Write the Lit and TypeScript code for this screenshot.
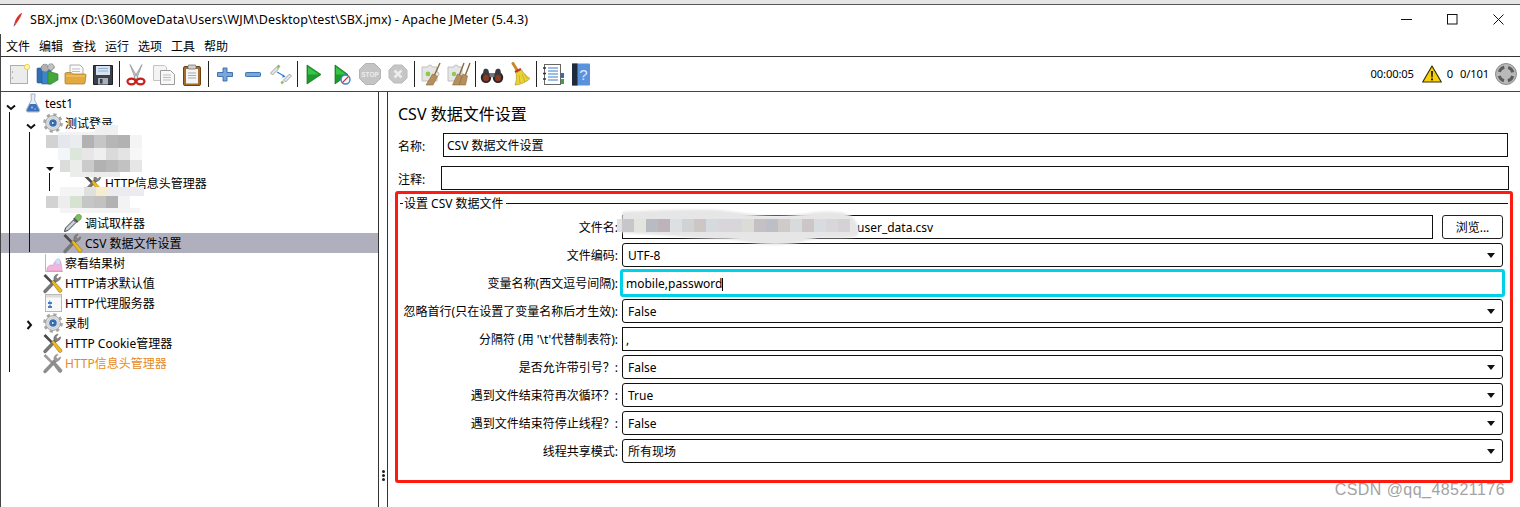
import { LitElement, html, css, svg } from "lit";
import { customElement } from "lit/decorators.js";

const icon = (w: number, h: number, body: unknown, cls = "") =>
  html`<svg class=${cls} width=${w} height=${h} viewBox="0 0 ${w} ${h}">${body}</svg>`;

const gear = () => icon(20, 20, svg`
  <circle cx="10" cy="10" r="8" fill="none" stroke="#a6a6a6" stroke-width="3.6" stroke-dasharray="3.100 3.180"/>
  <circle cx="10" cy="10" r="7.400" fill="#dedede" stroke="#9a9a9a" stroke-width=".8"/>
  <circle cx="10" cy="10" r="5" fill="#f0f4f8" stroke="#b4b4b4" stroke-width=".6"/>
  <circle cx="10" cy="10" r="3.800" fill="#3a72b8"/>
  <circle cx="10" cy="10" r="1.900" fill="#1d4f90"/>
  <path d="M8.900 8.600l2.800 1.400-2.800 1.400z" fill="#dbe7f4"/>`);

const tools = (gray = false) => icon(21, 21, svg`
  <path d="M3 18.500L14 7" stroke=${gray ? "#8e8e8e" : "#777"} stroke-width="3.400" stroke-linecap="round"/>
  <path d="M12.500 8A4.500 4.500 0 0 1 15.500 1.200l.6.2-2.200 2.700 1.700 1.800 2.700-2.100.4.800a4.500 4.500 0 0 1-6.200 3.400z" fill=${gray ? "#9a9a9a" : "#858585"} stroke=${gray ? "#8c8c8c" : "#555"} stroke-width=".5"/>
  <path d="M1.500 3L3.500 1l7.200 7.500-1.800 1.800z" fill=${gray ? "#9c9c9c" : "#4a4a4a"}/>
  <path d="M9.500 9l1.800-1.800 8.300 9.300a1.900 1.900 0 0 1-2.700 2.600z" fill=${gray ? "#8f8f8f" : "#ecba1e"} stroke=${gray ? "#808080" : "#9b7410"} stroke-width=".6"/>`);

const dropper = icon(20, 20, svg`
  <path d="M1.500 18.500l1-3.500 8-8 2.500 2.500-8 8z" fill="#c9d2d8" stroke="#39404a" stroke-width="1"/>
  <path d="M10 6l4 4 1.400-1.400-4-4z" fill="#555"/>
  <path d="M12 5l3 3c2.500-.6 4-3.200 3.200-5.200-.7-1.700-3.400-1.600-4.700-.6C12.400 3 12.200 4 12 5z" fill="#7cc05c" stroke="#4d8c38" stroke-width=".6"/>`);

const flask = icon(18, 20, svg`
  <path d="M7 1h4v1l-.4 5 5 9.500c.5 1.500-.3 2.500-1.600 2.500H4c-1.300 0-2.100-1-1.600-2.500l5-9.500L7 2z" fill="#e6edf5" stroke="#97a4b4" stroke-width=".8"/>
  <path d="M5.800 11h6.400l3 6c.3 1-.3 1.600-1.200 1.600H4c-.9 0-1.500-.6-1.200-1.600z" fill="#3d6fbf"/>
  <circle cx="8" cy="14.500" r="1" fill="#9fc0ee"/><circle cx="11" cy="16" r=".8" fill="#9fc0ee"/>`);

const chart = icon(20, 20, svg`
  <path d="M2.500 1v17.500H20" fill="none" stroke="#b9b9b9"/>
  <path d="M4 18v-3c2-3 4-3.500 6-2.500 1-3.500 3.500-6 5.500-6s3 4 3.500 11.500z" fill="#f2b6dc" stroke="#d98cc4" stroke-width=".6"/>
  <path d="M12 9c1-2 2.500-3.500 3.500-3.500s1.800 2 1.800 4-1.500 2.500-3 1.800S11.500 10 12 9z" fill="#cfe1f6" stroke="#9bb8dc" stroke-width=".5"/>`);

const proxy = icon(20, 20, svg`
  <rect x="2.500" y="1.500" width="16" height="17" fill="#f8f8f8" stroke="#b8b8b8"/>
  <rect x="3" y="2" width="15" height="2.500" fill="#dcdcdc"/>
  <rect x="5" y="9" width="4" height="2" fill="#3f7fc4"/><rect x="5" y="13" width="4" height="2" fill="#3f7fc4"/>
  <path d="M6 7l2 1.500-2 .5zM6 11.500h2v1.500H6z" fill="#7da9d8"/>`);

const tb: Record<string, unknown> = {
  new: svg`<rect x="3.500" y="3.500" width="17" height="18" fill="#ececec" stroke="#adadad"/>
    <circle cx="5.500" cy="10" r=".7" fill="#999"/><circle cx="5.500" cy="16" r=".7" fill="#999"/>
    <circle cx="20" cy="5" r="2.600" fill="#fff6b0" stroke="#e8d350"/>`,
  templates: svg`<rect x="2" y="6" width="7" height="15" rx="1" fill="#2f6fb5" stroke="#1f4f88" stroke-width=".6"/>
    <rect x="7" y="8" width="9" height="14" fill="#3c86c8" stroke="#245a92" stroke-width=".6"/>
    <path d="M13 9l10 3v6l-7 4h-3z" fill="#43a83c" stroke="#2e7a2a" stroke-width=".6"/>
    <circle cx="10" cy="6" r="3.800" fill="#b0b0b0" stroke="#7c7c7c" stroke-dasharray="2 1"/><circle cx="16" cy="5" r="3.200" fill="#c2c2c2" stroke="#858585" stroke-dasharray="2 1"/>`,
  open: svg`<path d="M7 3h10l3 3v9H7z" fill="#fafafa" stroke="#999" stroke-width=".8"/>
    <path d="M9 7h8M9 9.500h8" stroke="#bdbdbd"/>
    <path d="M2 12c0-1 .6-1.500 1.500-1.500H8L10 12h12c.8 0 1 .7 1 1.500L22 21c-.1.700-.6 1-1.300 1H3.300c-.8 0-1.300-.4-1.300-1.200z" fill="#e2a93f" stroke="#a8741f" stroke-width=".7"/>
    <path d="M3 14h19" stroke="#f2cd7c"/>`,
  save: svg`<path d="M2.500 3.500h19v19h-19z" fill="#3b3f48" stroke="#1f2127"/>
    <rect x="5" y="4" width="14" height="9" fill="#d7e3f0"/><path d="M7 6.500h10M7 9h10" stroke="#8fb0d2"/>
    <rect x="7" y="16" width="10" height="6.500" fill="#aab0ba"/><rect x="9" y="17" width="2.500" height="4.500" fill="#3b3f48"/>`,
  cut: svg`<path d="M6 2.500l8 13.500-2.500 1.500zM18 2.500L10 16l2.500 1.500z" fill="#c9c9c9" stroke="#8e8e8e" stroke-width=".7"/>
    <ellipse cx="7.500" cy="19.500" rx="4" ry="2.800" fill="none" stroke="#c8201c" stroke-width="2.200"/>
    <ellipse cx="16.500" cy="19.500" rx="4" ry="2.800" fill="none" stroke="#c8201c" stroke-width="2.200"/>`,
  copy: svg`<path d="M1.500 3.500h11l2 2v13h-13z" fill="#f4f4f4" stroke="#c4c4c4"/>
    <path d="M8.500 8.500h10l4 4v10h-14z" fill="#f8f8f8" stroke="#9b9b9b"/>
    <path d="M11 13h8M11 15.500h8M11 18h8" stroke="#bbb"/>`,
  paste: svg`<rect x="3.500" y="4.500" width="17" height="19" rx="1.500" fill="#a36b2c" stroke="#6c4314"/>
    <rect x="6" y="7" width="12" height="14.500" fill="#f5f5f5"/>
    <path d="M8 11h8M8 13.500h8M8 16h8" stroke="#aaa"/>
    <rect x="8" y="3" width="8" height="4" rx="1" fill="#d0d0d0" stroke="#666" stroke-width=".7"/>`,
  plus: svg`<path d="M10 6h4v4.500h5.500v4H14V19h-4v-4.500H4.500v-4H10z" fill="#7ba6d8" stroke="#336aaa" stroke-width=".9"/>`,
  minus: svg`<rect x="4.500" y="10.500" width="15" height="4" rx=".8" fill="#7ba6d8" stroke="#336aaa" stroke-width=".9"/>`,
  toggle: svg`<path d="M1.500 11l6-6 2 2-6 6z" fill="#e4e4e4" stroke="#888" stroke-width=".7"/><path d="M7.500 4.500l2-2 2 2-2 2z" fill="#8cbd6e"/>
    <path d="M22.500 14l-6 6-2-2 6-6z" fill="#e4e4e4" stroke="#888" stroke-width=".7"/><path d="M15 20.500l-2 2-1.500-2 2-2z" fill="#8cbd6e"/>
    <path d="M8 10l7 4" stroke="#2d7fd6" stroke-width="1.200"/><path d="M16.500 15l-3.500.5 1.500-3z" fill="#2d7fd6"/>`,
  play: svg`<path d="M5 3l14 9.500L5 22z" fill="#1d9a2b" stroke="#0f6f1b" stroke-width=".7"/><path d="M6 5l11 7.500H6z" fill="#37c548"/>`,
  playNo: svg`<path d="M5 3l13 9.500L5 22z" fill="#1d9a2b" stroke="#0f6f1b" stroke-width=".7"/><path d="M6 5l10 7.500H6z" fill="#37c548"/>
    <circle cx="15.500" cy="17.500" r="4.500" fill="#f4f8ff" stroke="#3b7fd0" stroke-width="1.400"/><path d="M12.500 20.500l6-6" stroke="#d8303a" stroke-width="1.100"/>`,
  stop: svg`<path d="M7.500 1.500h9l6 6v9l-6 6h-9l-6-6v-9z" fill="#c4c4c4" stroke="#b4b4b4"/>
    <text x="12" y="14.800" text-anchor="middle" class="stoptxt">STOP</text>`,
  shut: svg`<path d="M8 3h8l5 5v8l-5 5H8l-5-5V8z" fill="#c6c6c6" stroke="#bababa" stroke-linejoin="round"/>
    <path d="M8.500 8.500l7 7m0-7l-7 7" stroke="#ececec" stroke-width="2.600"/>`,
  clear: svg`<path d="M3 5h6a2 2 0 0 1 4 0h5v5a2 2 0 0 1 0 4v5H3z" fill="#e6e6e6" stroke="#c0c0c0"/>
    <circle cx="9" cy="12" r="2.400" fill="#8fca4a"/>
    <path d="M21 1l-6 13" stroke="#8a6a3e" stroke-width="1.400"/><path d="M13.500 12l5 2.500L14 23H7z" fill="#b5905e" stroke="#8a6a3e" stroke-width=".6"/>`,
  clearAll: svg`<path d="M1 5h6a2 2 0 0 1 4 0h4v14H1z" fill="#e6e6e6" stroke="#c0c0c0"/>
    <circle cx="7" cy="12" r="2.200" fill="#8fca4a"/>
    <path d="M17 1l-5 13M23 1l-5 13" stroke="#8a6a3e" stroke-width="1.400"/>
    <path d="M10.500 12l4.500 2-3 9H5.500z" fill="#b5905e" stroke="#8a6a3e" stroke-width=".6"/><path d="M16 12l4.500 2-2 9H12z" fill="#b5905e" stroke="#8a6a3e" stroke-width=".6"/>`,
  binoculars: svg`<ellipse cx="6" cy="15.500" rx="5.200" ry="5.500" fill="#26262a"/><ellipse cx="18" cy="15.500" rx="5.200" ry="5.500" fill="#26262a"/>
    <path d="M3.500 8.500c0-2.200 4.500-2.200 5 0l1 5h5l1-5c.5-2.200 5-2.200 5 0l1 5H2.500z" fill="#3a3a40"/>
    <ellipse cx="6" cy="16" rx="3" ry="3.200" fill="#8b3a22"/><ellipse cx="18" cy="16" rx="3" ry="3.200" fill="#8b3a22"/>
    <rect x="9.500" y="11" width="5" height="4" fill="#777"/>`,
  broom: svg`<path d="M5 1.500l5 8" stroke="#c58a2e" stroke-width="3" stroke-linecap="round"/>
    <path d="M6.500 9l6-3 1 2-6 3z" fill="#cf2a20"/>
    <path d="M8 11l5.500-3c2 3 5 6.500 8.500 8.500-3 3-9 6-15 6.500 1.500-4 1.800-8 1-12z" fill="#e9d23a" stroke="#b69a18" stroke-width=".7"/>
    <path d="M11 13l1 8M14 12l3 8M16.500 12l3 5" stroke="#bfa51e" stroke-width=".7"/>`,
  list: svg`<rect x="3.500" y="2.500" width="16" height="20" fill="#fff" stroke="#666"/>
    <path d="M2 6h3M2 11.500h3M2 17h3" stroke="#333" stroke-width="1.500"/>
    <path d="M7 6h10M7 9h10M7 12h10M7 15h10M7 18h10" stroke="#3a7bc8"/>
    <rect x="20" y="11" width="3" height="5" fill="#2f6fb5"/><rect x="20" y="17" width="3" height="5" fill="#3aa53a"/>`,
  help: svg`<rect x="3" y="1.500" width="18" height="22" rx="1" fill="#5b92dc"/>
    <rect x="3" y="1.500" width="5.500" height="22" fill="#1f2a3a"/>
    <text x="14.500" y="17.500" text-anchor="middle" class="helptxt">?</text>`,
};

const groups = [
  ["new", "templates", "open", "save"],
  ["cut", "copy", "paste"],
  ["plus", "minus", "toggle"],
  ["play", "playNo", "stop", "shut"],
  ["clear", "clearAll"],
  ["binoculars", "broom"],
  ["list", "help"],
];

const menus = ["文件", "编辑", "查找", "运行", "选项", "工具", "帮助"];

type Row = { indent: number; label?: string; ic?: unknown; sel?: boolean; warm?: boolean };
const rows: Row[] = [
  { indent: 22, label: "test1", ic: flask },
  { indent: 42, label: "测试登录", ic: gear() },
  { indent: 0 },
  { indent: 0 },
  { indent: 82, label: "HTTP信息头管理器", ic: tools() },
  { indent: 0 },
  { indent: 62, label: "调试取样器", ic: dropper },
  { indent: 62, label: "CSV 数据文件设置", ic: tools(), sel: true },
  { indent: 42, label: "察看结果树", ic: chart },
  { indent: 42, label: "HTTP请求默认值", ic: tools() },
  { indent: 42, label: "HTTP代理服务器", ic: proxy },
  { indent: 42, label: "录制", ic: gear() },
  { indent: 42, label: "HTTP Cookie管理器", ic: tools() },
  { indent: 42, label: "HTTP信息头管理器", ic: tools(true), warm: true },
];

type Cell = [number, number, number, number, string];
const treeBlur: Cell[] = [
  [95, 125, 23, 10, "#f0f0f0"],
  [58, 132, 37, 3, "#f3f3f3"],
  [46, 135, 12, 13, "#d2d2d2"], [58, 135, 12, 13, "#e4e8ec"], [70, 135, 12, 13, "#eaecef"], [82, 135, 12, 13, "#b2b2b2"],
  [94, 135, 12, 13, "#c6c6c6"], [106, 135, 12, 13, "#b6b6b6"], [118, 135, 12, 13, "#b2b2b2"], [130, 135, 12, 13, "#f4f4f4"],
  [58, 148, 12, 12, "#f2f6f8"], [70, 148, 12, 12, "#dde6da"], [82, 148, 12, 12, "#e8e6e6"], [94, 148, 12, 12, "#efefef"],
  [106, 148, 12, 12, "#dadada"], [118, 148, 12, 12, "#e4e4e4"], [130, 148, 12, 12, "#f7f7f7"],
  [60, 160, 10, 12, "#dcdcdc"], [70, 160, 12, 12, "#ebedeb"], [82, 160, 12, 12, "#cbcbcb"], [94, 160, 12, 12, "#b2b2b2"],
  [106, 160, 12, 12, "#b8b8b8"], [118, 160, 12, 12, "#c2c2c2"], [130, 160, 12, 12, "#e6e6e6"],
  [70, 172, 50, 5, "#ececec"],
  [60, 187, 24, 9, "#f4f4f4"], [84, 187, 12, 9, "#e0e0dc"], [96, 187, 12, 9, "#f6ecd2"], [108, 187, 36, 9, "#ececf0"],
  [46, 196, 12, 12, "#d2d2d2"], [58, 196, 12, 12, "#ededed"], [70, 196, 12, 12, "#d7e2d2"], [82, 196, 12, 12, "#c6c6c6"],
  [94, 196, 12, 12, "#c2c2c2"], [106, 196, 12, 12, "#b2b2b2"], [118, 196, 12, 12, "#f3f3f3"],
  [60, 208, 80, 5, "#f4f4f4"],
];
const mosaic = ["#c8c6c8", "#e4e4de", "#b8bcc2", "#bcb4b8", "#dde0e2", "#d0d2d4", "#ccc6c4", "#d4dade", "#d8d6da", "#d8d6da",
  "#dcdcd6", "#c4c0c4", "#bcc0c6", "#d0cac8", "#d8dadc", "#ccc6c8", "#d8dce0", "#d8d6d8", "#d4d2d4"];
const fileBlur: Cell[] = [
  [617, 219, 5, 13, "#e2e2e2"],
  ...mosaic.map((c, i): Cell => [622 + i * 12, 219, 12, 13, c]),
];

const labels: [string, string][] = [
  ["文件编码:", "UTF-8"],
  ["变量名称(西文逗号间隔):", ""],
  ["忽略首行(只在设置了变量名称后才生效):", "False"],
  ["分隔符 (用 '\\t'代替制表符):", ""],
  ["是否允许带引号？:", "False"],
  ["遇到文件结束符再次循环？:", "True"],
  ["遇到文件结束符停止线程？:", "False"],
  ["线程共享模式:", "所有现场"],
];

@customElement("app-root")
export class AppRoot extends LitElement {
  static styles = css`
    :host {
      display: block;
      width: 1520px;
      height: 507px;
      overflow: hidden;
      position: relative;
      background: #fff;
      color: #000;
      font: 12px/16px "Noto Sans", "Noto Sans CJK SC", sans-serif;
    }
    .app { display: flex; flex-direction: column; height: 507px; }
    .chrome { height: 4px; background: #e6e6e6; border-bottom: 1px solid #555; }
    .title { height: 29px; display: flex; align-items: center; padding-left: 11px; }
    .title .name { margin-left: 7px; font-size: 12.500px; letter-spacing: .08px; white-space: nowrap; }
    .winbtns { margin-left: auto; display: flex; }
    .winbtns svg { display: block; margin-right: 35px; }
    .winbtns svg:last-child { margin-right: 16px; }
    .menu { height: 22px; display: flex; gap: 9px; padding-left: 6px; align-items: center; border-bottom: 1px solid #333; border-left: 1px solid #444; }
    .menu span { padding-top: 4px; }
    .menu span:first-child { margin-left: -1px; }
    .toolbar { height: 34px; display: flex; align-items: center; padding-left: 5px; border-bottom: 1px solid #444; border-left: 1px solid #444; }
    .toolbar .first { margin-left: -1px; }
    .tbtn { width: 28px; height: 24px; display: flex; justify-content: center; }
    .sep { width: 5px; height: 26px; display: flex; justify-content: center; }
    .sep i { width: 1px; background: #222; display: block; margin-left: -1px; }
    .stoptxt { font: bold 6.500px "Liberation Sans", sans-serif; fill: #ececec; }
    .helptxt { font: 15px "Liberation Sans", sans-serif; fill: #dce9fa; }
    .status { margin-left: auto; display: flex; align-items: center; padding-right: 3px; font-size: 11.200px; letter-spacing: -.15px; }
    .status .time { margin-right: 8px; }
    .status .z { margin: 0 7px 0 5px; }
    .status .ratio { margin-right: 6px; }

    .main { flex: 1; display: flex; min-height: 0; }
    .tree { width: 377px; border-left: 1px solid #444; position: relative; padding-top: 1px; }
    .tree .row { height: 20px; display: flex; align-items: center; white-space: nowrap; }
    .tree .row.sel { background: #b0afbd; }
    .tree .row.warm { color: #e8891c; }
    .tree .slot { width: 21px; display: flex; justify-content: center; flex: none; }
    .tree .label { margin-left: 2px; padding-top: 2px; }
    .arrow { position: absolute; top: 7px; }
    .vline { position: absolute; width: 1px; background: #111; }
    .blur { position: absolute; filter: blur(.7px); }
    .smear { position: absolute; left: 222px; top: 108px; filter: blur(1px); }
    .split { width: 8px; border-left: 1px solid #333; border-right: 1px solid #333; position: relative; flex: none; }
    .dots { position: absolute; left: 3px; top: 378px; display: flex; flex-direction: column; gap: 1px; }
    .dots i { width: 3px; height: 3px; border-radius: 50%; background: #222; display: block; }

    .panel { flex: 1; min-width: 0; padding-top: 11px; position: relative; }
    h1 { font: inherit; font-size: 16px; line-height: 22px; margin: 0 0 8px 10px; }
    .nv { display: flex; align-items: center; height: 24px; }
    .nv .k { margin-left: 10px; width: 45px; flex: none; padding-top: 4px; }
    .nv.c { margin-top: 9px; }
    .nv.c .k { width: 43px; }
    .field { border: 1px solid #111; height: 24px; box-sizing: border-box; line-height: 24px; padding-left: 3px; white-space: nowrap; }
    .nv .field { flex: none; width: 1065px; }
    .nv.c .field { width: 1068px; }
    .group { margin: 1px 7px 0; border: 3px solid #ff1a10; border-radius: 3px; height: 292px; box-sizing: border-box; }
    .legend { display: flex; align-items: center; height: 18px; padding: 0 2px; }
    .legend b { font-weight: 400; padding: 2px 2px 0; white-space: nowrap; }
    .legend i { height: 1px; background: #111; display: block; }
    .legend .a { width: 3px; flex: none; margin-right: -1px; }
    .legend .z2 { flex: 1; }
    .form { display: grid; grid-template-columns: 220px 881px; column-gap: 4px; row-gap: 4px; grid-auto-rows: 24px; margin-top: 3px; }
    .lab { text-align: right; line-height: 26px; white-space: nowrap; }
    .filewrap { display: flex; gap: 9px; }
    .filewrap .field { flex: 1; padding-left: 234px; }
    .btn { width: 61px; height: 24px; box-sizing: border-box; border: 1px solid #222; border-radius: 3px; text-align: center; line-height: 24px; }
    .combo { position: relative; border: 1px solid #111; border-radius: 3px; box-sizing: border-box; height: 24px; line-height: 24px; padding-left: 5px; }
    .combo::after { content: ""; position: absolute; right: 7px; top: 9px; border: 4px solid transparent; border-top: 5px solid #111; border-bottom: 0; }
    .plain { border: 1px solid #111; box-sizing: border-box; height: 24px; line-height: 24px; padding-left: 3px; }
    .focus { margin: -2px; height: 28px; border: 3px solid #00d0e8; border-radius: 3px; box-sizing: border-box; padding: 2px 0 0 3px; display: flex; align-items: center; }
    .caret { width: 1px; height: 13px; background: #000; display: inline-block; }
    .mark { position: absolute; right: 15px; bottom: 7px; font: 16px/20px "Liberation Sans", sans-serif; color: #a3a3a3; letter-spacing: .45px; }
  `;

  private cells(list: Cell[], ox: number, oy: number) {
    return list.map(([x, y, w, h, c]) =>
      html`<div class="blur" style="left:${x - ox}px;top:${y - oy}px;width:${w}px;height:${h}px;background:${c}"></div>`);
  }

  render() {
    const arrowDown = icon(10, 7, svg`<path d="M1 1.500l4 3.500 4-3.500" fill="none" stroke="#111" stroke-width="2"/>`);
    const arrowRight = icon(7, 10, svg`<path d="M1.500 1l3.500 4-3.500 4" fill="none" stroke="#111" stroke-width="2"/>`);
    const smallDown = icon(8, 5, svg`<path d="M0 0h8L4 4z" fill="#111"/>`);
    return html`
      <div class="app">
        <div class="chrome"></div>
        <div class="title">
          ${icon(12, 16, svg`<path d="M10.500 1C7 3 4.500 7 3.500 11l1.500 1C7 9 9.500 5.500 11 1.500z" fill="#d8342c"/><path d="M3.500 11l-1 4 2.500-3z" fill="#7a2b8a"/>`)}
          <span class="name">SBX.jmx (D:\\360MoveData\\Users\\WJM\\Desktop\\test\\SBX.jmx) - Apache JMeter (5.4.3)</span>
          <div class="winbtns">
            ${icon(11, 11, svg`<path d="M0 5.500h11" stroke="#111"/>`)}
            ${icon(11, 11, svg`<rect x=".5" y=".5" width="9.500" height="9.500" fill="none" stroke="#111"/>`)}
            ${icon(11, 11, svg`<path d="M.5.500l10 10m0-10l-10 10" stroke="#111"/>`)}
          </div>
        </div>
        <div class="menu">${menus.map((m) => html`<span>${m}</span>`)}</div>
        <div class="toolbar">
          ${groups.map((g, i) => html`
            ${i ? html`<div class="sep"><i></i></div>` : ""}
            ${g.map((n, j) => html`<div class="tbtn ${i === 0 && j === 0 ? "first" : ""}">${icon(24, 24, tb[n])}</div>`)}
          `)}
          <div class="status">
            <span class="time">00:00:05</span>
            ${icon(20, 18, svg`<path d="M10 1l9.300 16H.7z" fill="#f7cf0a" stroke="#3b3300" stroke-width="1.200" stroke-linejoin="round"/><path d="M9.100 6h1.800l-.3 6.500H9.400z" fill="#111"/><rect x="9.100" y="13.500" width="1.800" height="1.800" fill="#111"/>`)}
            <span class="z">0</span>
            <span class="ratio">0/101</span>
            ${icon(22, 22, svg`<circle cx="11" cy="11" r="10.500" fill="#b9b9b9" stroke="#8a8a8a"/><circle cx="11" cy="11" r="7" fill="none" stroke="#5c5c5c" stroke-width="3" stroke-dasharray="7 4" stroke-dashoffset="-2"/>`)}
          </div>
        </div>
        <div class="main">
          <div class="tree">
            ${rows.map((r) => html`
              <div class="row ${r.sel ? "sel" : ""} ${r.warm ? "warm" : ""}" style="padding-left:${r.indent - 1}px">
                ${r.ic ? html`<span class="slot">${r.ic}</span>` : ""}${r.label ? html`<span class="label">${r.label}</span>` : ""}
              </div>`)}
            <div class="vline" style="left:8px;top:20px;height:260px"></div>
            <div class="vline" style="left:28px;top:40px;height:120px"></div>
            <div class="vline" style="left:48px;top:81px;height:18px"></div>
            <div class="arrow" style="left:5px">${arrowDown}</div>
            <div class="arrow" style="left:25px;top:26px">${arrowDown}</div>
            <div class="arrow" style="left:25px;top:226px">${arrowRight}</div>
            ${this.cells(treeBlur, 1, 92)}
            <div class="arrow" style="left:45px;top:68px">${smallDown}</div>
          </div>
          <div class="split"><div class="dots"><i></i><i></i><i></i></div></div>
          <div class="panel">
            <h1>CSV 数据文件设置</h1>
            <div class="nv"><span class="k">名称:</span><div class="field">CSV 数据文件设置</div></div>
            <div class="nv c"><span class="k">注释:</span><div class="field"></div></div>
            <div class="group">
              <div class="legend"><i class="a"></i><b>设置 CSV 数据文件</b><i class="z2"></i></div>
              <div class="form">
                <div class="lab">文件名:</div>
                <div class="filewrap"><div class="field">user_data.csv</div><div class="btn">浏览...</div></div>
                ${labels.map(([l, v], i) => html`
                  <div class="lab">${l}</div>
                  ${i === 1
                    ? html`<div class="focus">mobile,password<span class="caret"></span></div>`
                    : i === 3
                    ? html`<div class="plain">,</div>`
                    : html`<div class="combo">${v}</div>`}
                `)}
              </div>
            </div>
            ${icon(260, 50, svg`<path d="M12 12C40 10 90 9 110 10c20 2 35 6 60 6 20 0 35-6 55-4 20 0 25 13 23 23-2 4-25 3-40 3-15 3-25 7-43 7-20 0-35-6-55-6-20 0-50-4-98-6z" fill="#e6e6e6"/>`, "smear")}
            ${this.cells(fileBlur, 388, 92)}
          </div>
        </div>
      </div>
      <div class="mark">CSDN @qq_48521176</div>
    `;
  }
}
